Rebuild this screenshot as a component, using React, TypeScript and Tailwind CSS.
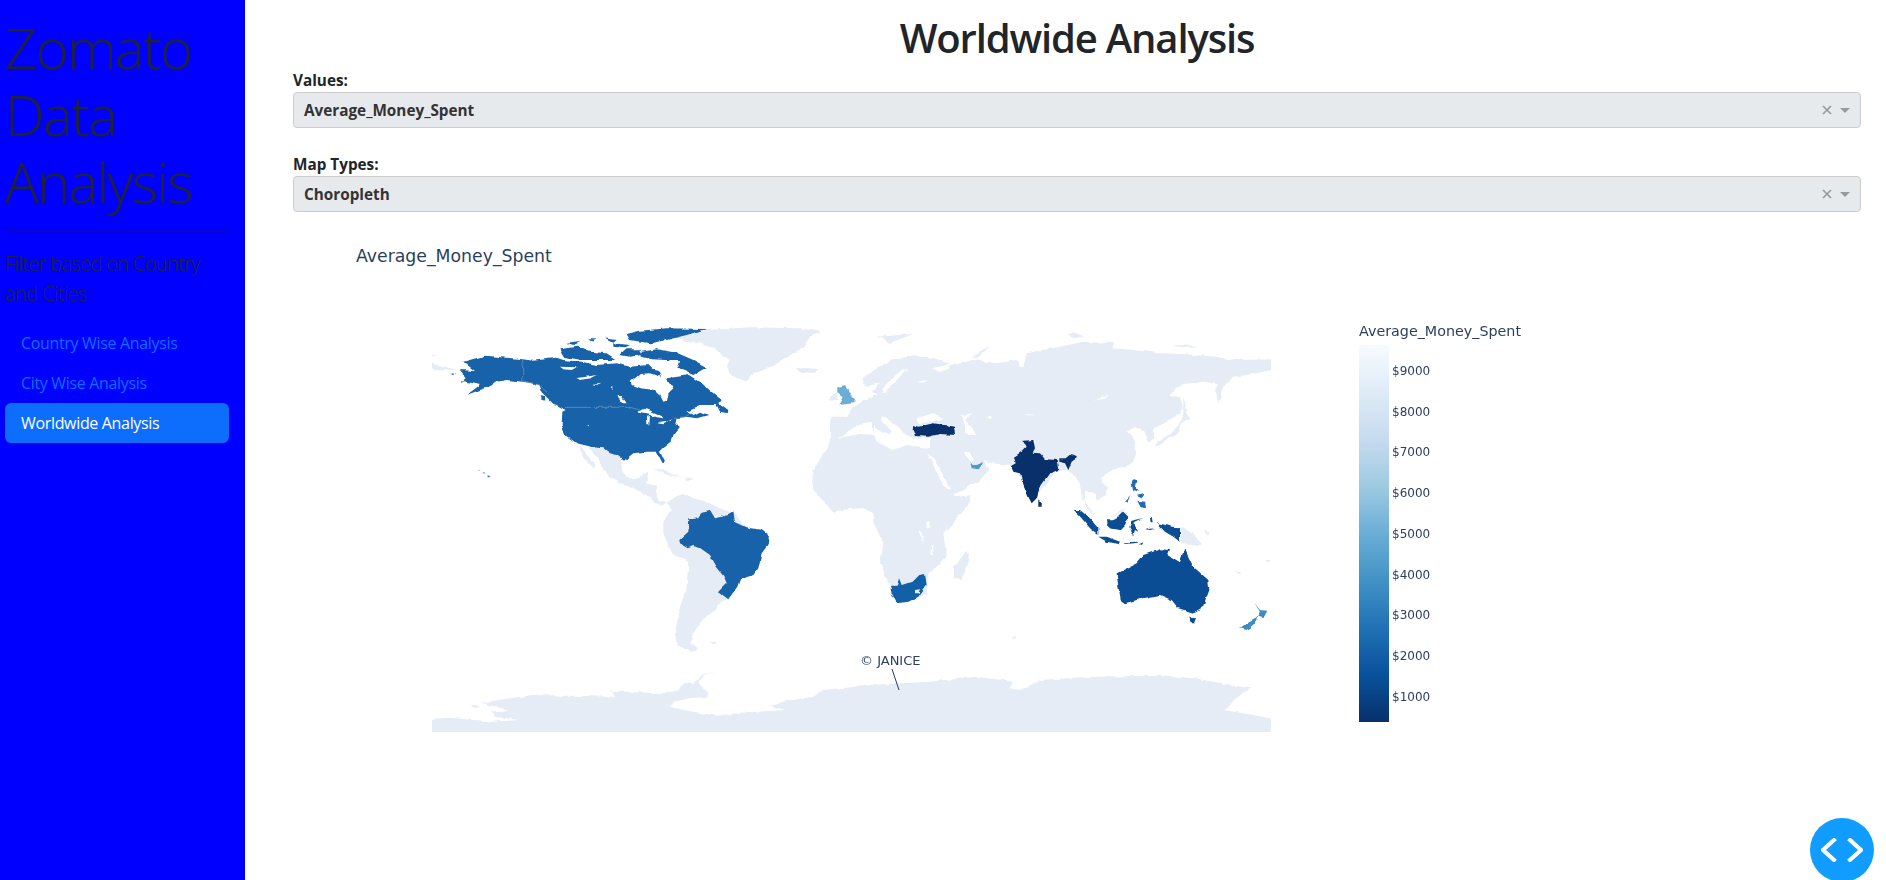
const LAND = '#e5ecf6';
const USA = '#1762a8';
const DEEP = '#08306b';
const INDO = '#0b4d94';

const ticks = ['$9000', '$8000', '$7000', '$6000', '$5000', '$4000', '$3000', '$2000', '$1000'];

// every shape below is written in the reference's 3x crop coordinates, the groups scale them back down
function WorldMap() {
  return (
    <svg viewBox="293 236 1300 520" className="block h-[520px] w-[1300px] font-['DejaVu_Sans',sans-serif]">
      <defs>
        <linearGradient id="blues" x1="0" y1="1" x2="0" y2="0">
          <stop offset="0" stopColor="#08306b" />
          <stop offset="0.125" stopColor="#08519c" />
          <stop offset="0.25" stopColor="#2171b5" />
          <stop offset="0.375" stopColor="#4292c6" />
          <stop offset="0.5" stopColor="#6baed6" />
          <stop offset="0.625" stopColor="#9ecae1" />
          <stop offset="0.75" stopColor="#c6dbef" />
          <stop offset="0.875" stopColor="#deebf7" />
          <stop offset="1" stopColor="#f7fbff" />
        </linearGradient>
        <clipPath id="frame">
          <rect x="432" y="300" width="839" height="432" />
        </clipPath>
        {/* roughens the hand drawn coast lines */}
        <filter id="coast" filterUnits="userSpaceOnUse" x="400" y="300" width="900" height="460" colorInterpolationFilters="sRGB">
          <feTurbulence type="fractalNoise" baseFrequency="0.11" numOctaves="2" seed="4" />
          <feDisplacementMap in="SourceGraphic" scale="4" xChannelSelector="R" yChannelSelector="G" />
        </filter>
      </defs>

      <text x="356" y="262" fontSize="17.3" fill="#2a3f5f">Average_Money_Spent</text>

      <g clipPath="url(#frame)">
        <g filter="url(#coast)">
          {/* Americas, Greenland, UK */}
          <g transform="translate(400 310) scale(0.33333)">
            <polygon fill={LAND} points="80,155 120,165 165,180 80,175" />
            <polygon fill={LAND} points="80,135 110,136 104,141 80,141" />
            <polygon fill={LAND} points="830,80 920,60 1050,52 1200,55 1265,65 1230,80 1215,110 1180,130 1120,170 1060,190 1040,215 1010,205 985,180 985,150 950,120 900,100 850,95" />
            <polygon fill={LAND} points="1185,175 1220,170 1258,175 1245,187 1205,190" />
            <polygon fill={LAND} points="535,405 555,425 590,470 580,475 550,440" />
            <polygon fill={LAND} points="565,412 610,415 650,435 668,455 665,480 680,505 720,505 730,490 745,487 738,520 770,530 775,570 800,575 790,585 765,575 720,545 680,525 630,505 615,480 590,445" />
            <polygon fill={LAND} points="760,478 790,478 815,492 850,505 815,497 785,485" />
            <polygon fill={LAND} points="850,500 885,507 860,511" />
            <polygon fill={LAND} points="800,578 820,565 850,552 880,565 920,575 950,590 1000,610 1040,650 1000,780 985,868 960,875 950,895 915,920 900,940 880,970 870,1000 895,1018 875,1025 830,1005 825,970 840,890 860,830 865,755 815,730 790,670 790,640 815,600" />
            <polygon fill={LAND} points="928,997 948,996 945,1002 930,1002" />
            <polygon fill={LAND} points="1287,265 1310,250 1312,270 1290,272" />

            <g fill={USA}>
              <polygon points="190,155 255,137 368,148 400,152 470,143 490,150 545,155 590,165 650,160 690,170 745,165 760,180 800,205 870,195 900,215 940,250 965,270 958,280 985,300 983,310 960,305 950,285 910,285 870,305 880,315 900,305 925,315 890,325 860,320 830,325 825,345 840,350 820,375 815,395 790,415 780,425 795,457 788,460 770,425 740,425 700,430 672,452 650,435 630,430 610,415 580,412 530,400 495,375 485,345 487,305 497,300 470,285 455,280 425,250 415,225 370,215 320,210 290,215 270,230 240,240 200,255 240,225 190,213 200,205 180,180 225,183" />
              <polygon points="680,72 720,62 800,55 920,57 860,75 800,90 750,100 690,90" />
              <polygon points="478,118 530,110 570,125 620,130 650,150 600,150 545,150 490,140" />
              <polygon points="500,98 540,93 520,105" />
              <polygon points="615,82 650,87 640,95" />
              <polygon points="565,85 585,85 580,95" />
              <polygon points="640,100 690,105 670,115 640,110" />
              <polygon points="680,118 720,118 730,135 690,140 660,135" />
              <polygon points="725,125 770,118 830,128 880,150 920,172 880,195 840,178 800,150 755,148 725,140" />
              <polygon points="750,178 775,182 790,195 760,192" />
              <polygon points="422,258 435,262 436,272 425,268" />
              <polygon points="152,190 170,193 160,194" />
              <polygon points="182,213 195,215 186,217" />
              <polygon points="838,690 865,665 868,628 895,625 905,605 930,600 945,625 985,615 1000,607 1005,635 1040,652 1085,660 1110,680 1105,705 1085,730 1075,775 1060,795 1020,808 1012,830 985,868 955,845 980,820 970,795 950,770 930,735 895,710 880,705 860,712 840,700" />
            </g>

            <g fill="#ffffff">
              <polygon points="692,215 720,192 750,190 780,200 785,170 810,150 840,150 835,170 815,180 800,205 820,235 805,250 805,270 790,275 780,255 765,240 720,235 695,225" />
              <polygon points="480,170 530,172 515,180 490,178" />
              <polygon points="530,205 590,195 570,205 540,210" />
              <polygon points="578,222 605,218 590,225" />
              <polygon points="632,235 640,228 640,240" />
              <polygon points="652,258 665,258 680,280 670,280" />
              <polygon points="712,305 735,296 755,305 785,318 790,325 768,322 750,315 722,310" />
              <polygon points="741,320 750,318 748,343 742,343" />
              <polygon points="772,340 800,335 818,328 813,332 790,343" />
              <polygon points="862,305 905,285 925,290 900,298 875,308" />
              <polygon points="565,345 570,345 568,349" />
            </g>

            <g stroke="#7f98b4" strokeWidth="2" fill="none">
              <polyline points="368,148 368,212 415,225 445,250" />
              <polyline points="495,292 690,292 720,300" />
              <polyline points="820,325 860,320 880,305" />
            </g>

            <polygon fill="#6aaed6" points="1312,232 1335,225 1345,245 1365,268 1360,280 1315,285 1328,262 1312,250" />
          </g>

          {/* Eurasia, Africa, Indonesia */}
          <g transform="translate(850 310) scale(0.33333)">
            <polygon
              fill={LAND}
              points="-60,335 -55,320 -10,320 5,295 40,270 70,262 65,235 40,225 40,205 80,175 130,145 200,138 260,150 300,160 250,180 320,160 370,150 440,160 500,150 520,170 530,130 640,108 700,95 795,100 790,115 870,122 930,130 1000,132 1100,140 1150,150 1290,148 1290,180 1262,180 1205,193 1150,200 1125,225 1105,278 1095,240 1105,222 1060,215 1000,222 955,255 990,262 1000,295 975,320 945,335 905,360 915,385 895,395 885,365 855,352 830,365 845,375 855,395 858,430 850,455 830,470 790,480 770,490 750,505 770,530 768,555 740,572 735,548 705,545 700,570 720,595 735,615 715,600 695,565 690,520 665,490 650,480 620,480 600,510 570,545 545,580 515,510 490,480 480,465 425,460 400,450 420,478 390,510 350,535 310,560 362,555 355,585 325,620 280,670 290,740 260,770 235,790 230,850 180,875 140,880 120,830 90,760 100,700 70,640 70,610 40,595 0,597 -50,605 -110,540 -110,480 -60,400 -60,385"
            />
            <polygon fill={LAND} points="1000,260 1010,300 1020,325 990,345 985,370 950,390 915,412 920,395 960,375 985,345 1000,320 1000,290" />
            <polygon fill={LAND} points="312,770 350,722 358,750 335,810 312,805" />
            <polygon fill={LAND} points="80,80 190,72 120,98" />
            <polygon fill={LAND} points="370,140 400,115 480,98 420,110 395,130 385,145" />
            <polygon fill={LAND} points="650,72 680,68 700,80 670,85" />
            <polygon fill={LAND} points="965,105 1050,108 1000,115" />
            <polygon fill={LAND} points="785,620 830,590 820,605" />
            <polygon fill={LAND} points="992,652 1020,665 1055,705 1020,705 992,697" />
            <polygon fill={LAND} points="1060,660 1080,672 1070,675" />
            <polygon fill={LAND} points="1155,780 1172,790 1165,792" />
            <polygon fill={LAND} points="1245,755 1262,750 1255,760" />

            <g fill="#ffffff">
              <polygon points="-40,385 -20,377 0,358 40,340 62,335 85,360 112,375 125,365 90,330 100,318 145,350 165,375 185,380 190,385 245,385 238,415 170,405 130,420 80,395 75,375 30,372" />
              <polygon points="200,325 250,310 280,325 250,335 205,340" />
              <polygon points="335,315 370,310 345,325 380,375 350,375 345,345" />
              <polygon points="414,320 424,316 424,326 416,326" />
              <polygon points="732,272 765,258 775,248 765,265" />
              <polygon points="520,315 558,310 535,316" />
              <polygon points="232,430 250,445 305,540 285,530 262,490" />
              <polygon points="310,552 360,535 362,555 315,562" />
              <polygon points="342,428 358,430 372,450 362,458 348,440" />
              <polygon points="228,640 242,635 240,655 230,655" />
              <polygon points="208,665 214,665 222,695 214,688" />
              <polygon points="245,705 250,705 250,735 245,735" />
              <polygon points="60,225 90,220 65,245 85,255 50,255" />
              <polygon points="100,250 130,220 165,185 180,178 155,180 120,210 95,240" />
              <polygon points="205,215 230,210 225,216 210,218" />
              <polygon points="510,130 525,125 520,170 505,170" />
              <polygon points="250,175 290,165 300,175 270,185" />
            </g>
            <polygon fill={LAND} points="66,338 72,338 72,360 66,358" />

            <g fill={DEEP}>
              <polygon points="190,345 205,350 250,340 285,345 315,350 318,375 270,372 235,380 195,378 188,360" />
              <polygon points="520,392 550,390 555,415 548,428 570,430 585,448 620,450 625,480 600,490 575,525 565,545 560,565 545,580 535,560 515,510 510,490 490,485 483,468 497,460 492,440 515,425 530,410" />
              <polygon points="625,445 650,445 665,432 685,440 665,455 655,480 645,460 625,455" />
              <polygon points="565,568 575,580 575,593 565,593" />
            </g>
            <polygon fill="#4d9ac9" points="360,455 368,465 385,465 398,455 395,470 385,478 365,475" />
            <polygon fill="#1460a8" points="120,830 140,830 147,805 155,825 185,815 205,795 225,792 230,825 205,860 175,875 140,880 125,850" />
            <polygon fill={LAND} points="195,840 210,838 205,850 195,850" />

            <g fill={INDO}>
              <polygon points="672,600 690,600 720,625 745,655 745,675 720,655 695,625" />
              <polygon points="745,680 770,680 810,695 810,703 770,695" />
              <polygon points="768,628 785,628 805,620 820,605 835,620 825,645 810,660 780,655 770,645" />
              <polygon points="845,632 880,625 850,638 865,665 855,660 850,675 838,655" />
              <polygon points="920,640 945,645 965,650 990,652 990,695 970,680 945,665" />
              <polygon points="822,697 860,695 865,698 825,702" />
              <polygon points="868,705 880,700 876,708" />
              <polygon points="897,622 903,622 905,640 899,640" />
              <polygon points="888,658 918,655 905,660" />
            </g>
            <g fill="#1f6eb4">
              <polygon points="850,508 862,510 858,530 868,545 850,540 845,520" />
              <polygon points="862,572 885,575 888,595 872,592" />
              <polygon points="860,555 880,548 875,562" />
              <polygon points="825,575 842,558 832,575" />
            </g>
          </g>

          {/* Australia, New Zealand */}
          <g transform="translate(850 500) scale(0.33333)">
            <g fill={INDO}>
              <polygon points="800,220 860,190 880,165 930,148 960,150 955,165 990,187 1003,145 1030,200 1075,240 1078,270 1060,320 1030,338 985,325 965,300 930,285 880,295 825,310 812,300 805,260" />
              <polygon points="1018,350 1042,352 1035,370 1025,370" />
            </g>
            <g fill="#3f8bc1">
              <polygon points="1213,308 1230,330 1252,332 1240,355 1225,350 1230,335" />
              <polygon points="1170,385 1195,365 1222,350 1215,370 1190,390" />
            </g>
            <polygon fill={LAND} points="487,408 497,408 497,413 487,413" />
          </g>

          {/* Antarctica */}
          <g transform="translate(400 520) scale(0.33333)">
            <polygon
              fill={LAND}
              points="70,660 70,598 150,593 200,598 280,605 355,600 285,590 270,575 325,570 300,563 245,548 330,535 400,525 650,530 630,515 680,515 730,518 800,520 835,510 855,490 880,490 900,470 950,450 910,470 895,485 925,515 925,530 870,535 820,545 810,560 850,570 950,587 1020,578 1155,570 1105,555 1175,540 1240,530 1270,510 1420,495 1500,490 1590,485 1730,470 1840,485 1830,505 1860,510 1920,480 2070,470 2300,467 2380,475 2550,505 2500,540 2475,570 2640,600 2640,660"
            />
            <polygon fill={LAND} points="212,556 232,556 240,562 222,563" />
          </g>
        </g>

        {/* Hawaii stays crisp, too small for the coast filter */}
        <g transform="translate(400 310) scale(0.33333)" fill={USA}>
          <polygon points="235,480 240,481 238,483" />
          <polygon points="248,486 256,489 252,491" />
          <polygon points="262,496 271,499 265,503" />
        </g>
      </g>

      <line x1="892" y1="669" x2="899" y2="690" stroke="#2a3f5f" strokeWidth="1" />
      <text x="860" y="665" fontSize="13" fill="#2a3f5f">© JANICE</text>

      <text x="1359" y="336" fontSize="14.3" fill="#2a3f5f">Average_Money_Spent</text>
      <rect x="1359" y="345" width="30" height="377" fill="url(#blues)" />
      {ticks.map((t, i) => (
        <text key={t} x="1392" y={375 + i * 40.7} fontSize="12" fill="#2a3f5f">{t}</text>
      ))}
    </svg>
  );
}

function Dropdown({ label, value }: { label: string; value: string }) {
  return (
    <div className="mb-6">
      <div className="h-6 text-[15.3px] leading-6 font-bold text-[#212529]">{label}</div>
      <div className="flex h-9 items-center rounded border border-[#ccc] bg-[#e7eaed] pl-2.5 pr-[10px]">
        <span className="flex-1 text-[15.3px] font-bold text-[#333]">{value}</span>
        <svg width="10" height="10" viewBox="0 0 10 10" className="mr-2">
          <path d="M1 1 L9 9 M9 1 L1 9" stroke="#999" strokeWidth="1.7" />
        </svg>
        <svg width="10" height="5" viewBox="0 0 10 5">
          <path d="M0 0 H10 L5 5 Z" fill="#999" />
        </svg>
      </div>
    </div>
  );
}

export default function App() {
  return (
    <div className="relative flex h-[880px] w-full overflow-hidden bg-white font-['Open_Sans',sans-serif]">
      {/* sidebar */}
      <aside className="w-[245px] shrink-0 bg-[#0000ff] pl-[5px] pr-4 pt-[14px] text-[#212529]">
        <h2 className="text-[56px] leading-[67px] font-light tracking-[-1.6px]">Zomato Data Analysis</h2>
        <hr className="mt-[15px] border-t border-[#212529]/25" />
        <p className="mt-[18px] text-[20px] leading-[30px] font-light tracking-[-0.65px]">Filter based on Country and Cities</p>
        <nav className="mt-[14px] flex flex-col text-[16px] tracking-[-0.33px]">
          <a className="h-10 rounded-md px-4 leading-10 text-[#0d6efd]">Country Wise Analysis</a>
          <a className="h-10 rounded-md px-4 leading-10 text-[#0d6efd]">City Wise Analysis</a>
          <a className="h-10 rounded-md bg-[#0d6efd] px-4 leading-10 text-white">Worldwide Analysis</a>
        </nav>
      </aside>

      {/* page */}
      <main className="min-w-0 flex-1 pl-12 pr-[25px] pt-[14px]">
        <h1 className="mb-[6px] h-12 text-center text-[40px] leading-[48px] font-semibold tracking-[-1.15px] text-[#212529]">Worldwide Analysis</h1>
        <Dropdown label="Values:" value="Average_Money_Spent" />
        <Dropdown label="Map Types:" value="Choropleth" />
        <WorldMap />
      </main>

      {/* debug button */}
      <div className="absolute left-[1810px] top-[818px] flex h-16 w-16 items-center justify-center rounded-full bg-[#119dff]">
        <svg width="42" height="24" viewBox="0 0 42 24" fill="none" stroke="#fff" strokeWidth="4" strokeLinecap="square">
          <path d="M13 2 L2 12 L13 22" />
          <path d="M29 2 L40 12 L29 22" />
        </svg>
      </div>
    </div>
  );
}
